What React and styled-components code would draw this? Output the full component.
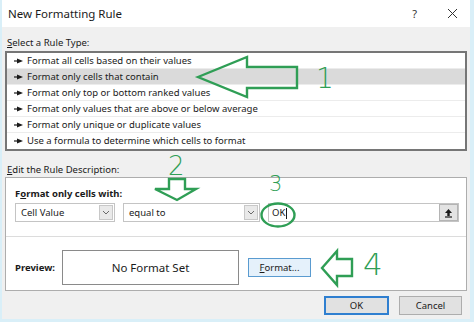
import React from "react";
import styled, { createGlobalStyle } from "styled-components";

const GlobalStyle = createGlobalStyle`
  html, body { margin: 0; padding: 0; }
  body { font-family: "Noto Sans", "Open Sans", sans-serif; }
`;

const Page = styled.div`
  position: relative;
  width: 474px;
  height: 322px;
  overflow: hidden;
  background: #d9eff8;
`;

const Dialog = styled.div`
  margin-left: 2px;
  width: 468px;
  height: 319px;
  background: #f0f0f0;
  display: flex;
  flex-direction: column;
  box-sizing: border-box;
`;

const TitleBar = styled.div`
  height: 27px;
  flex: none;
  background: #ffffff;
  display: flex;
  align-items: center;
  justify-content: space-between;
  padding: 0 12px 0 6px;
`;

const Title = styled.span`
  font-size: 11.5px;
  color: #1a1a1a;
`;

const TitleButtons = styled.div`
  display: flex;
  align-items: center;
  gap: 30px;
  color: #333;
`;

const Help = styled.span`
  font-size: 11px;
`;

const Body = styled.div`
  padding: 8px 3px 0;
  display: flex;
  flex-direction: column;
`;

const GroupLabel = styled.div`
  font-size: 9.5px;
  line-height: 15px;
  color: #1a1a1a;
  padding-left: 2px;
  margin-top: ${(p) => p.$top || 0}px;
  margin-bottom: ${(p) => p.$bottom || 0}px;
  u { text-decoration: underline; }
`;

const RuleList = styled.div`
  border: 2px solid #767676;
  background: #ffffff;
  display: flex;
  flex-direction: column;
`;

const RuleRow = styled.div`
  height: 16px;
  box-sizing: border-box;
  display: flex;
  align-items: center;
  gap: 4px;
  padding-left: 7px;
  font-size: 9.5px;
  color: #1a1a1a;
  background: ${(p) => (p.$selected ? "#dadada" : "#ffffff")};
  border-bottom: 1px solid ${(p) => (p.$last ? "transparent" : "#ececec")};
`;

const EditBox = styled.div`
  border: 1px solid #adadad;
  background: #ffffff;
  display: flex;
  flex-direction: column;
`;

const Section = styled.div`
  padding: 8px 0 14px 9px;
  border-bottom: 1px solid #dcdcdc;
`;

const BoldLabel = styled.div`
  font-size: 9.5px;
  font-weight: 700;
  line-height: 15px;
  color: #1a1a1a;
  margin-bottom: 2px;
`;

const ControlsRow = styled.div`
  display: flex;
  gap: 8px;
`;

const Select = styled.div`
  width: ${(p) => p.$width}px;
  height: 19px;
  box-sizing: border-box;
  border: 1px solid #c4c4c4;
  background: #ffffff;
  display: flex;
  align-items: center;
  justify-content: space-between;
  padding: 0 1px 0 5px;
  font-size: 9.5px;
  color: #1a1a1a;
`;

const DropButton = styled.div`
  width: 14px;
  height: 15px;
  box-sizing: border-box;
  border: 1px solid #c8c8c8;
  background: #e9e9e9;
  display: flex;
  align-items: center;
  justify-content: center;
`;

const TextInput = styled.div`
  width: 191px;
  height: 19px;
  box-sizing: border-box;
  border: 1px solid #c4c4c4;
  background: #ffffff;
  display: flex;
  align-items: center;
  justify-content: space-between;
  padding: 0 0 0 3px;
  font-size: 9.5px;
  color: #1a1a1a;
`;

const Caret = styled.span`
  display: inline-block;
  width: 1px;
  height: 11px;
  background: #1a1a1a;
  vertical-align: middle;
  margin-left: 1px;
`;

const RefButton = styled.div`
  width: 19px;
  height: 17px;
  box-sizing: border-box;
  border: 1px solid #b4b4b4;
  background: #e3e3e3;
  display: flex;
  align-items: center;
  justify-content: center;
`;

const PreviewRow = styled.div`
  display: flex;
  align-items: center;
  padding: 13px 0 5px 9px;
`;

const PreviewLabel = styled.div`
  width: 47px;
  font-size: 9.5px;
  font-weight: 700;
  color: #1a1a1a;
`;

const PreviewBox = styled.div`
  width: 177px;
  height: 35px;
  box-sizing: border-box;
  border: 1px solid #8a8a8a;
  display: flex;
  align-items: center;
  justify-content: center;
  font-size: 11.5px;
  color: #1a1a1a;
`;

const Button = styled.div`
  width: ${(p) => p.$width}px;
  height: 19px;
  box-sizing: border-box;
  display: flex;
  align-items: center;
  justify-content: center;
  font-size: 9.5px;
  color: #1a1a1a;
  background: ${(p) => (p.$tint ? "#e5f1fb" : "#e1e1e1")};
  border: ${(p) => (p.$default ? "2px solid #2f7fd0" : p.$tint ? "1px solid #5a9bd0" : "1px solid #adadad")};
  margin-left: ${(p) => p.$left || 0}px;
`;

const Footer = styled.div`
  display: flex;
  justify-content: flex-end;
  gap: 10px;
  padding: 5px 5px 0 0;
`;

const Overlay = styled.svg`
  position: absolute;
  left: 0;
  top: 0;
  pointer-events: none;
`;

const rules = [
  "Format all cells based on their values",
  "Format only cells that contain",
  "Format only top or bottom ranked values",
  "Format only values that are above or below average",
  "Format only unique or duplicate values",
  "Use a formula to determine which cells to format",
];

function RuleArrow() {
  return (
    <svg width="9" height="6" viewBox="0 0 9 6">
      <path d="M0 3h4" stroke="#1a1a1a" strokeWidth="1.2" />
      <path d="M3 0.5L9 3L3 5.5Z" fill="#1a1a1a" />
    </svg>
  );
}

function Chevron() {
  return (
    <svg width="8" height="5" viewBox="0 0 8 5">
      <path d="M1 1l3 3l3-3" fill="none" stroke="#6a6a6a" strokeWidth="1" />
    </svg>
  );
}

function UpArrow() {
  return (
    <svg width="9" height="10" viewBox="0 0 9 10">
      <path d="M4.5 1L1 5h2.3v3h2.4V5H8z" fill="#1a1a1a" />
      <path d="M1 9h7" stroke="#1a1a1a" strokeWidth="1.2" />
    </svg>
  );
}

function Annotations() {
  const green = "#2f9e55";
  const num = { fill: green, fontFamily: "'DejaVu Sans', sans-serif", fontWeight: 300 };
  return (
    <Overlay width="474" height="322" viewBox="0 0 474 322">
      <g fill="none" stroke={green} strokeWidth="2.4" strokeLinejoin="miter">
        <path d="M198 77L247 57V67H297V88H247V97Z" />
        <path d="M169 179H185V189H196L177 200L155 189H169Z" />
        <ellipse cx="278" cy="215" rx="16.5" ry="11.5" />
        <path d="M322 268L337 251V259H352V276H337V285Z" />
      </g>
      <text x="316" y="88" fontSize="28" style={num}>1</text>
      <text x="168" y="175" fontSize="26" style={num}>2</text>
      <text x="269" y="191" fontSize="21" style={num}>3</text>
      <text x="363" y="275" fontSize="31" style={num}>4</text>
    </Overlay>
  );
}

export default function App() {
  return (
    <>
      <GlobalStyle />
      <Page>
        <Dialog>
          <TitleBar>
            <Title>New Formatting Rule</Title>
            <TitleButtons>
              <Help>?</Help>
              <svg width="11" height="11" viewBox="0 0 11 11">
                <path d="M1 1l9 9M10 1l-9 9" stroke="#333" strokeWidth="1" />
              </svg>
            </TitleButtons>
          </TitleBar>
          <Body>
            <GroupLabel $bottom={1}>
              <u>S</u>elect a Rule Type:
            </GroupLabel>
            <RuleList>
              {rules.map((r, i) => (
                <RuleRow key={r} $selected={i === 1} $last={i === rules.length - 1}>
                  <RuleArrow />
                  {r}
                </RuleRow>
              ))}
            </RuleList>
            <GroupLabel $top={11}>
              <u>E</u>dit the Rule Description:
            </GroupLabel>
            <EditBox>
              <Section>
                <BoldLabel>
                  F<u>o</u>rmat only cells with:
                </BoldLabel>
                <ControlsRow>
                  <Select $width={100}>
                    Cell Value
                    <DropButton><Chevron /></DropButton>
                  </Select>
                  <Select $width={137}>
                    equal to
                    <DropButton><Chevron /></DropButton>
                  </Select>
                  <TextInput>
                    <span>OK<Caret /></span>
                    <RefButton><UpArrow /></RefButton>
                  </TextInput>
                </ControlsRow>
              </Section>
              <PreviewRow>
                <PreviewLabel>Preview:</PreviewLabel>
                <PreviewBox>No Format Set</PreviewBox>
                <Button $width={63} $tint $left={9}>
                  <span><u>F</u>ormat...</span>
                </Button>
              </PreviewRow>
            </EditBox>
            <Footer>
              <Button $width={65} $default>OK</Button>
              <Button $width={63}>Cancel</Button>
            </Footer>
          </Body>
        </Dialog>
        <Annotations />
      </Page>
    </>
  );
}
